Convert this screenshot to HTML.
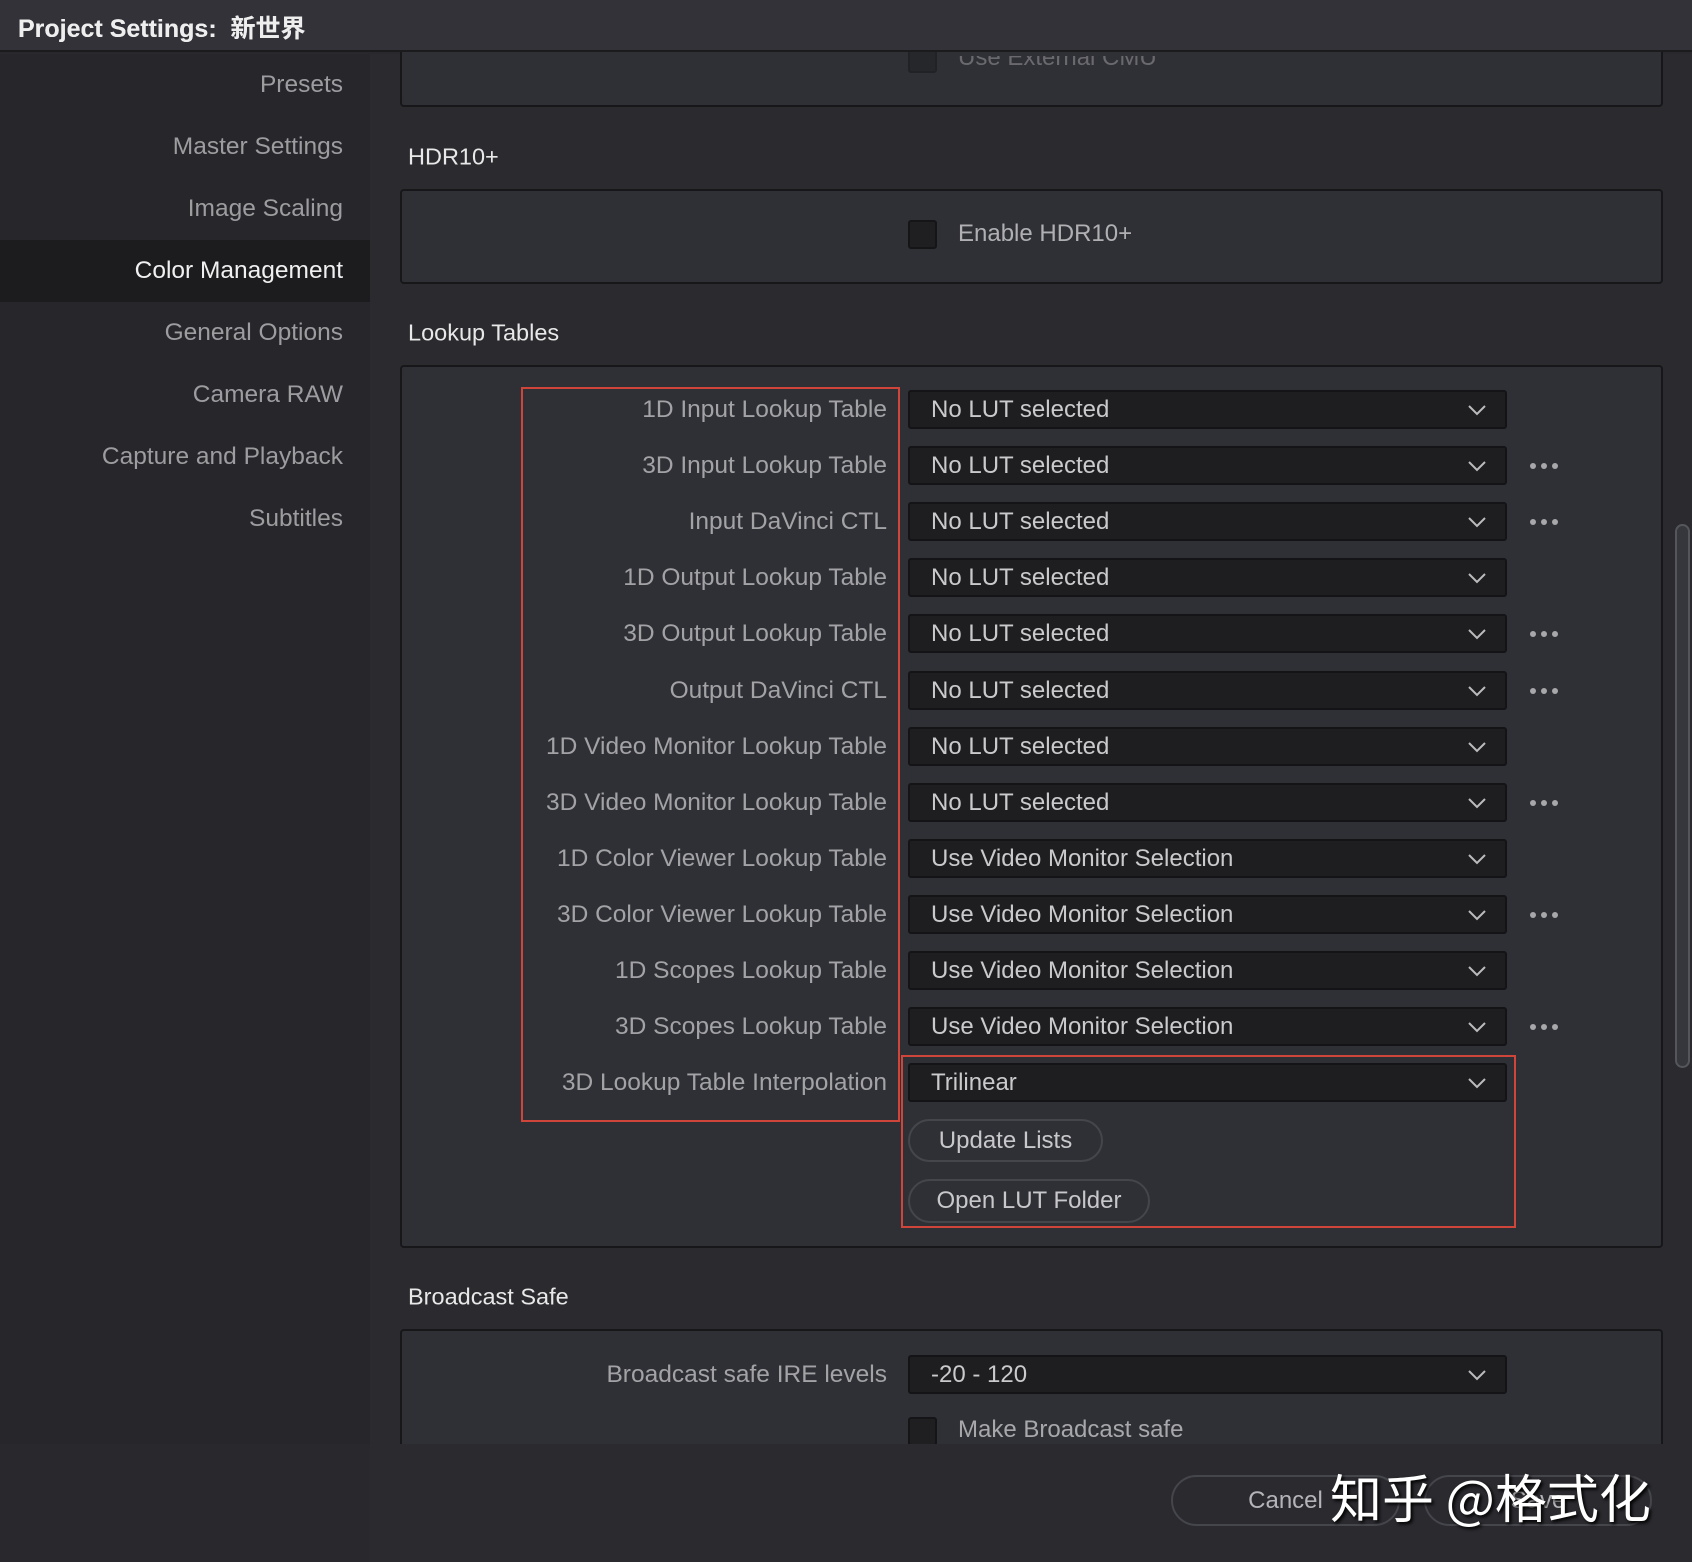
<!DOCTYPE html>
<html><head><meta charset="utf-8"><style>
*{margin:0;padding:0;box-sizing:border-box}
body{width:1692px;height:1562px;background:#28282d;font-family:"Liberation Sans","Noto Sans CJK SC",sans-serif;position:relative;overflow:hidden;color:#aaa}
.a{position:absolute}
.title{left:0;top:0;width:1692px;height:52px;background:#323238;border-bottom:2px solid #1b1b1e}
.title span{position:absolute;left:18px;top:9px;font-size:25px;font-weight:bold;color:#eee}
.side{left:0;top:54px;width:370px;height:1390px;background:#27272b}
.si{position:absolute;right:1349px;font-size:24.5px;color:#9d9da0;white-space:nowrap;transform:translateY(-50%)}
.sel{left:0;top:240px;width:370px;height:62px;background:#1c1c1f}
.content{left:370px;top:54px;width:1322px;height:1390px;background:#2a2a2f}
.panel{position:absolute;left:400px;width:1263px;background:#2f3036;border:2px solid #17171a;border-radius:4px}
.h{position:absolute;left:408px;font-size:23.5px;color:#e8e8e8;transform:translateY(-50%)}
.lbl{position:absolute;right:805px;font-size:24.5px;color:#a3a3a6;white-space:nowrap;transform:translateY(-50%)}
.dd{position:absolute;left:908px;width:599px;height:39px;background:#1e1e20;border:2px solid #141416;border-radius:3px;font-size:24px;color:#cacacc;padding-left:21px;line-height:35px}
.dd svg{position:absolute;right:18px;top:12px}
.dots{position:absolute;left:1530px;font-size:20px;color:#a8a8ab;letter-spacing:2px}
.dots i{display:inline-block;width:6px;height:6px;border-radius:3px;background:#a8a8ab;margin-right:5px}
.cb{position:absolute;width:29px;height:29px;background:#1f1f21;border:2px solid #151517;border-radius:3px}
.btn{position:absolute;border:2px solid #45464c;border-radius:22px;font-size:24px;color:#c8c8ca;text-align:center}
.red{position:absolute;border:2px solid #d0453a}
</style></head><body>
<div class="a title"><span>Project Settings:&nbsp; 新世界</span></div>
<div class="a side"></div>
<div class="a sel"></div>
<div class="si" style="top:85px">Presets</div>
<div class="si" style="top:147px">Master Settings</div>
<div class="si" style="top:209px">Image Scaling</div>
<div class="si" style="top:271px;color:#f0f0f0">Color Management</div>
<div class="si" style="top:333px">General Options</div>
<div class="si" style="top:395px">Camera RAW</div>
<div class="si" style="top:457px">Capture and Playback</div>
<div class="si" style="top:519px">Subtitles</div>
<div class="a content"></div>
<div class="panel" style="top:40px;height:67px"></div>
<div class="cb" style="left:908px;top:45px;opacity:.5;height:28px"></div>
<div class="a" style="left:958px;top:44px;font-size:24px;color:#6a6a6e;clip-path:inset(12px 0 0 0)">Use External CMU</div>
<div class="a" style="left:370px;top:0;width:1322px;height:52px;background:#323238;border-bottom:2px solid #1b1b1e"></div>
<div class="a title" style="width:370px;background:transparent;border:none"><span>Project Settings:&nbsp; 新世界</span></div>
<div class="h" style="top:157px">HDR10+</div>
<div class="panel" style="top:189px;height:95px"></div>
<div class="cb" style="left:908px;top:220px"></div>
<div class="a" style="left:958px;top:220px;font-size:24px;color:#b0b0b3">Enable HDR10+</div>
<div class="h" style="top:333px">Lookup Tables</div>
<div class="panel" style="top:365px;height:883px"></div>
<div class="red" style="left:521px;top:387px;width:379px;height:735px"></div>
<div class="red" style="left:901px;top:1055px;width:615px;height:173px"></div>
<div id="rows"></div>
<div class="btn" style="left:908px;top:1119px;width:195px;height:43px;line-height:39px">Update Lists</div>
<div class="btn" style="left:908px;top:1179px;width:242px;height:44px;line-height:40px">Open LUT Folder</div>
<div class="h" style="top:1297px">Broadcast Safe</div>
<div class="panel" style="top:1329px;height:140px"></div>
<div class="lbl" style="top:1375px">Broadcast safe IRE levels</div>
<div class="dd" style="top:1355px">-20 - 120<svg width="20" height="12" viewBox="0 0 20 12"><path d="M2 2 L10 10 L18 2" fill="none" stroke="#bbb" stroke-width="2"/></svg></div>
<div class="cb" style="left:908px;top:1417px"></div>
<div class="a" style="left:958px;top:1416px;font-size:24px;color:#a8a8ab">Make Broadcast safe</div>
<div class="a" style="left:0;top:1444px;width:1692px;height:118px;background:#28282d"></div>
<div class="a" style="left:370px;top:1444px;width:1322px;height:118px;background:#2a2a2f"></div>
<div class="btn" style="left:1171px;top:1475px;width:229px;height:51px;border-radius:26px;line-height:47px;color:#b5b5b8">Cancel</div>
<div class="btn" style="left:1424px;top:1475px;width:228px;height:51px;border-radius:26px;line-height:47px;color:#b5b5b8">Save</div>
<div class="a" style="left:1330px;top:1458px;font-size:52px;color:#fff;text-shadow:2px 2px 3px #000;white-space:nowrap;font-family:'Noto Sans CJK SC',sans-serif">知乎 @格式化</div>
<div class="a" style="left:1675px;top:524px;width:15px;height:544px;border:2px solid #55565c;border-radius:8px;background:#36373c"></div>
<script>
var L=[["1D Input Lookup Table","No LUT selected",0],["3D Input Lookup Table","No LUT selected",1],["Input DaVinci CTL","No LUT selected",1],["1D Output Lookup Table","No LUT selected",0],["3D Output Lookup Table","No LUT selected",1],["Output DaVinci CTL","No LUT selected",1],["1D Video Monitor Lookup Table","No LUT selected",0],["3D Video Monitor Lookup Table","No LUT selected",1],["1D Color Viewer Lookup Table","Use Video Monitor Selection",0],["3D Color Viewer Lookup Table","Use Video Monitor Selection",1],["1D Scopes Lookup Table","Use Video Monitor Selection",0],["3D Scopes Lookup Table","Use Video Monitor Selection",1],["3D Lookup Table Interpolation","Trilinear",0]];
var h="";L.forEach(function(r,i){var c=410+56.1*i;
h+='<div class="lbl" style="top:'+c+'px">'+r[0]+'</div>';
h+='<div class="dd" style="top:'+(c-20)+'px">'+r[1]+'<svg width="20" height="12" viewBox="0 0 20 12"><path d="M2 2 L10 10 L18 2" fill="none" stroke="#bbb" stroke-width="2"/></svg></div>';
if(r[2])h+='<div class="dots" style="top:'+(c-14)+'px"><i></i><i></i><i></i></div>';});
document.getElementById("rows").innerHTML=h;
</script>
</body></html>
